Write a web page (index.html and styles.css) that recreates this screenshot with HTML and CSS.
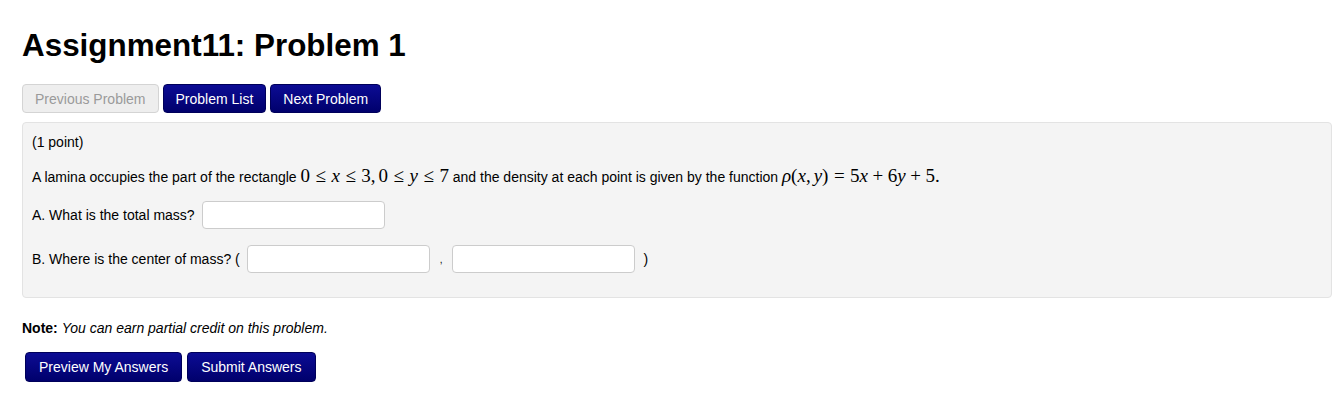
FILE: index.html
```html
<!DOCTYPE html>
<html>
<head>
<meta charset="utf-8">
<link rel="stylesheet" href="styles.css">
</head>
<body>
<div class="page">
  <h1 class="title">Assignment11: Problem 1</h1>
  <div class="nav">
    <span class="btn btn-disabled">Previous Problem</span>
    <span class="btn">Problem List</span>
    <span class="btn">Next Problem</span>
  </div>
  <div class="well">
    <p class="pts">(1 point)</p>
    <p class="stmt">A lamina occupies the part of the rectangle <span class="m">0<span class="rel">≤</span><i>x</i><span class="rel">≤</span>3,<span class="sp"></span>0<span class="rel">≤</span><i>y</i><span class="rel">≤</span>7</span> and the density at each point is given by the function <span class="m"><i>ρ</i>(<i>x</i>,<span class="sp"></span><i>y</i>)<span class="rel">=</span>5<i>x</i><span class="bin">+</span>6<i>y</i><span class="bin">+</span>5.</span></p>
    <div class="q">A. What is the total mass? <span class="inp"></span></div>
    <div class="q q2">B. Where is the center of mass? ( <span class="inp"></span> <span class="comma">,</span> <span class="inp"></span> <span class="close">)</span></div>
  </div>
  <p class="note"><b>Note:</b> <i>You can earn partial credit on this problem.</i></p>
  <div class="actions">
    <span class="btn btn-lg">Preview My Answers</span>
    <span class="btn btn-lg">Submit Answers</span>
  </div>
</div>
</body>
</html>
```
FILE: styles.css
```css
html, body { margin: 0; padding: 0; background: #fff; }
body { font-family: "Liberation Sans", Arial, sans-serif; color: #000; }
.page { padding: 0 5px 0 22px; }
.title { font-size: 31.4px; font-weight: bold; margin: 0; padding-top: 28px; line-height: 36px; height: 56px; }
.nav { display: flex; gap: 4px; }
.btn { display: inline-flex; align-items: center; height: 29px; box-sizing: border-box; padding: 0 12px; font-size: 14px; color: #fff; background: linear-gradient(#0c0c94, #00006c); border: 1px solid #00005a; border-radius: 4px; }
.btn-disabled { color: #9a9a9a; background: #eeeeee; border-color: #d4d4d4; }
.well { margin-top: 9px; background: #f4f4f4; border: 1px solid #e3e3e3; border-radius: 4px; padding: 9px 10px 24px 9px; font-size: 14px; }
.well p { margin: 0; }
.pts { line-height: 20px; }
.stmt { margin-top: 14px !important; line-height: 20px; height: 20px; }
.m { font-family: "Liberation Serif", "DejaVu Serif", serif; font-size: 19px; line-height: 1; }
.m i { font-style: italic; }
.rel { margin: 0 5.5px; }
.bin { margin: 0 4.5px; }
.sp { display: inline-block; width: 3px; }
.q { display: flex; align-items: center; gap: 7px; margin-top: 15px; height: 28px; }
.q2 { margin-top: 16px; }
.inp { display: inline-block; width: 183px; height: 28px; box-sizing: border-box; background: #fff; border: 1px solid #ccc; border-radius: 4px; }
.comma { margin: 0 2px 0 3px; font-size: 10px; }
.close { margin-left: 2px; }
.note { margin: 22px 0 0; font-size: 14px; line-height: 16px; }
.actions { display: flex; gap: 5px; margin-top: 16px; padding-left: 3px; }
.btn-lg { height: 30px; font-size: 14px; padding: 0 13px; }
```
